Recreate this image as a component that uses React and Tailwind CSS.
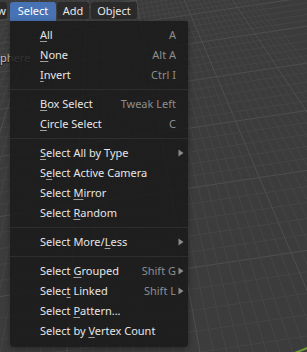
import React from "react";

const items = [
  { t: "All", u: 0, sc: "A" },
  { t: "None", u: 0, sc: "Alt A" },
  { t: "Invert", u: 0, sc: "Ctrl I" },
  { sep: true },
  { t: "Box Select", u: 0, sc: "Tweak Left" },
  { t: "Circle Select", u: 0, sc: "C" },
  { sep: true },
  { t: "Select All by Type", u: 0, arrow: true },
  { t: "Select Active Camera", u: 1 },
  { t: "Select Mirror", u: 7 },
  { t: "Select Random", u: 7 },
  { sep: true },
  { t: "Select More/Less", u: 12, arrow: true },
  { sep: true },
  { t: "Select Grouped", u: 7, sc: "Shift G", arrow: true },
  { t: "Select Linked", u: 5, sc: "Shift L", arrow: true },
  { t: "Select Pattern...", u: 7 },
  { t: "Select by Vertex Count", u: 10 },
];

function Grid() {
  const slope = -0.15;
  const majors = [-8, 14.7, 43.7, 80.7, 128, 188, 268, 375];
  const shallow = [];
  for (let i = 0; i < majors.length - 1; i++) {
    const a = majors[i];
    const b = majors[i + 1];
    for (let k = 0; k < 5; k++) {
      shallow.push({ y: a + ((b - a) * k) / 5, major: k === 0 });
    }
  }
  const lines = [];
  shallow.forEach((s, i) => {
    const y0 = s.y - slope * 190;
    const y1 = s.y + slope * (307 - 190);
    lines.push(
      <line
        key={"h" + i}
        x1={0}
        y1={y0}
        x2={307}
        y2={y1}
        stroke={s.major ? "#4f4f4f" : "#454545"}
        strokeWidth={1}
      />
    );
  });
  const vp = { x: 100, y: -200 };
  for (let k = -25; k <= 25; k++) {
    const xb = 200 + 13.3 * k;
    const major = ((k % 10) + 10) % 10 === 0;
    lines.push(
      <line
        key={"v" + k}
        x1={vp.x}
        y1={vp.y}
        x2={xb + (xb - vp.x) * 0.2}
        y2={352 + 552 * 0.2}
        stroke={major ? "#4f4f4f" : "#454545"}
        strokeWidth={1}
      />
    );
  }
  return (
    <svg
      className="absolute inset-0"
      width="307"
      height="352"
      viewBox="0 0 307 352"
    >
      {lines}
      <line x1={292} y1={354} x2={310} y2={347} stroke="#6f9c34" strokeWidth={2} />
    </svg>
  );
}

function Label({ t, u }) {
  return (
    <span className="whitespace-pre">
      {t.slice(0, u)}
      <span className="underline decoration-[#a0a0a0] underline-offset-[2px]">
        {t[u]}
      </span>
      {t.slice(u + 1)}
    </span>
  );
}

function Arrow() {
  return (
    <svg width="6" height="8" viewBox="0 0 6 8">
      <path d="M0.5 0.5 L5.5 4 L0.5 7.5 Z" fill="#8a8a8a" />
    </svg>
  );
}

export default function App() {
  return (
    <div className="relative w-[307px] h-[352px] overflow-hidden bg-[#3c3c3c] font-['Noto_Sans',sans-serif] text-[11px]">
      <Grid />
      <div className="absolute left-[-6px] top-[50px] text-[#c8c8c8] leading-[16px] [text-shadow:0_1px_1px_#000]">
        Sphere
      </div>
      <div className="relative flex flex-col">
        <div className="flex items-start h-[21px] pt-[2px]">
          <div className="w-[7px] h-[17px] rounded-r-[3px] bg-[#2a2a2a] flex justify-end overflow-hidden leading-[17px] text-[#e6e6e6] pr-[1px] whitespace-nowrap">
            View
          </div>
          <div className="ml-[3px] w-[46px] h-[19px] rounded-t-[3px] bg-[#4772b3] text-white leading-[17px] text-center">
            Select
          </div>
          <div className="ml-[1px] w-[32px] h-[17px] rounded-[3px] bg-[#2a2a2a] text-[#e6e6e6] leading-[17px] text-center">
            Add
          </div>
          <div className="ml-[2px] w-[46px] h-[17px] rounded-[3px] bg-[#2a2a2a] text-[#e6e6e6] leading-[17px] text-center">
            Object
          </div>
        </div>
        <div className="ml-[10px] w-[178px] pt-[4px] pb-[6px] bg-[rgba(26,26,26,0.86)] rounded-b-[4px] shadow-[0_2px_6px_rgba(0,0,0,0.35)] flex flex-col">
          {items.map((it, i) =>
            it.sep ? (
              <div key={i} className="h-[9px] flex items-center">
                <div className="w-full h-px bg-[#2e2e2e]" />
              </div>
            ) : (
              <div
                key={i}
                className="h-[20px] flex items-center pl-[30px] pr-[4px] leading-[20px]"
              >
                <div className="flex-1 text-[#e6e6e6]">
                  <Label t={it.t} u={it.u} />
                </div>
                {it.sc && <div className="text-[#8e8e8e]">{it.sc}</div>}
                <div className="w-[8px] flex items-center justify-end">
                  {it.arrow && <Arrow />}
                </div>
              </div>
            )
          )}
        </div>
      </div>
    </div>
  );
}
